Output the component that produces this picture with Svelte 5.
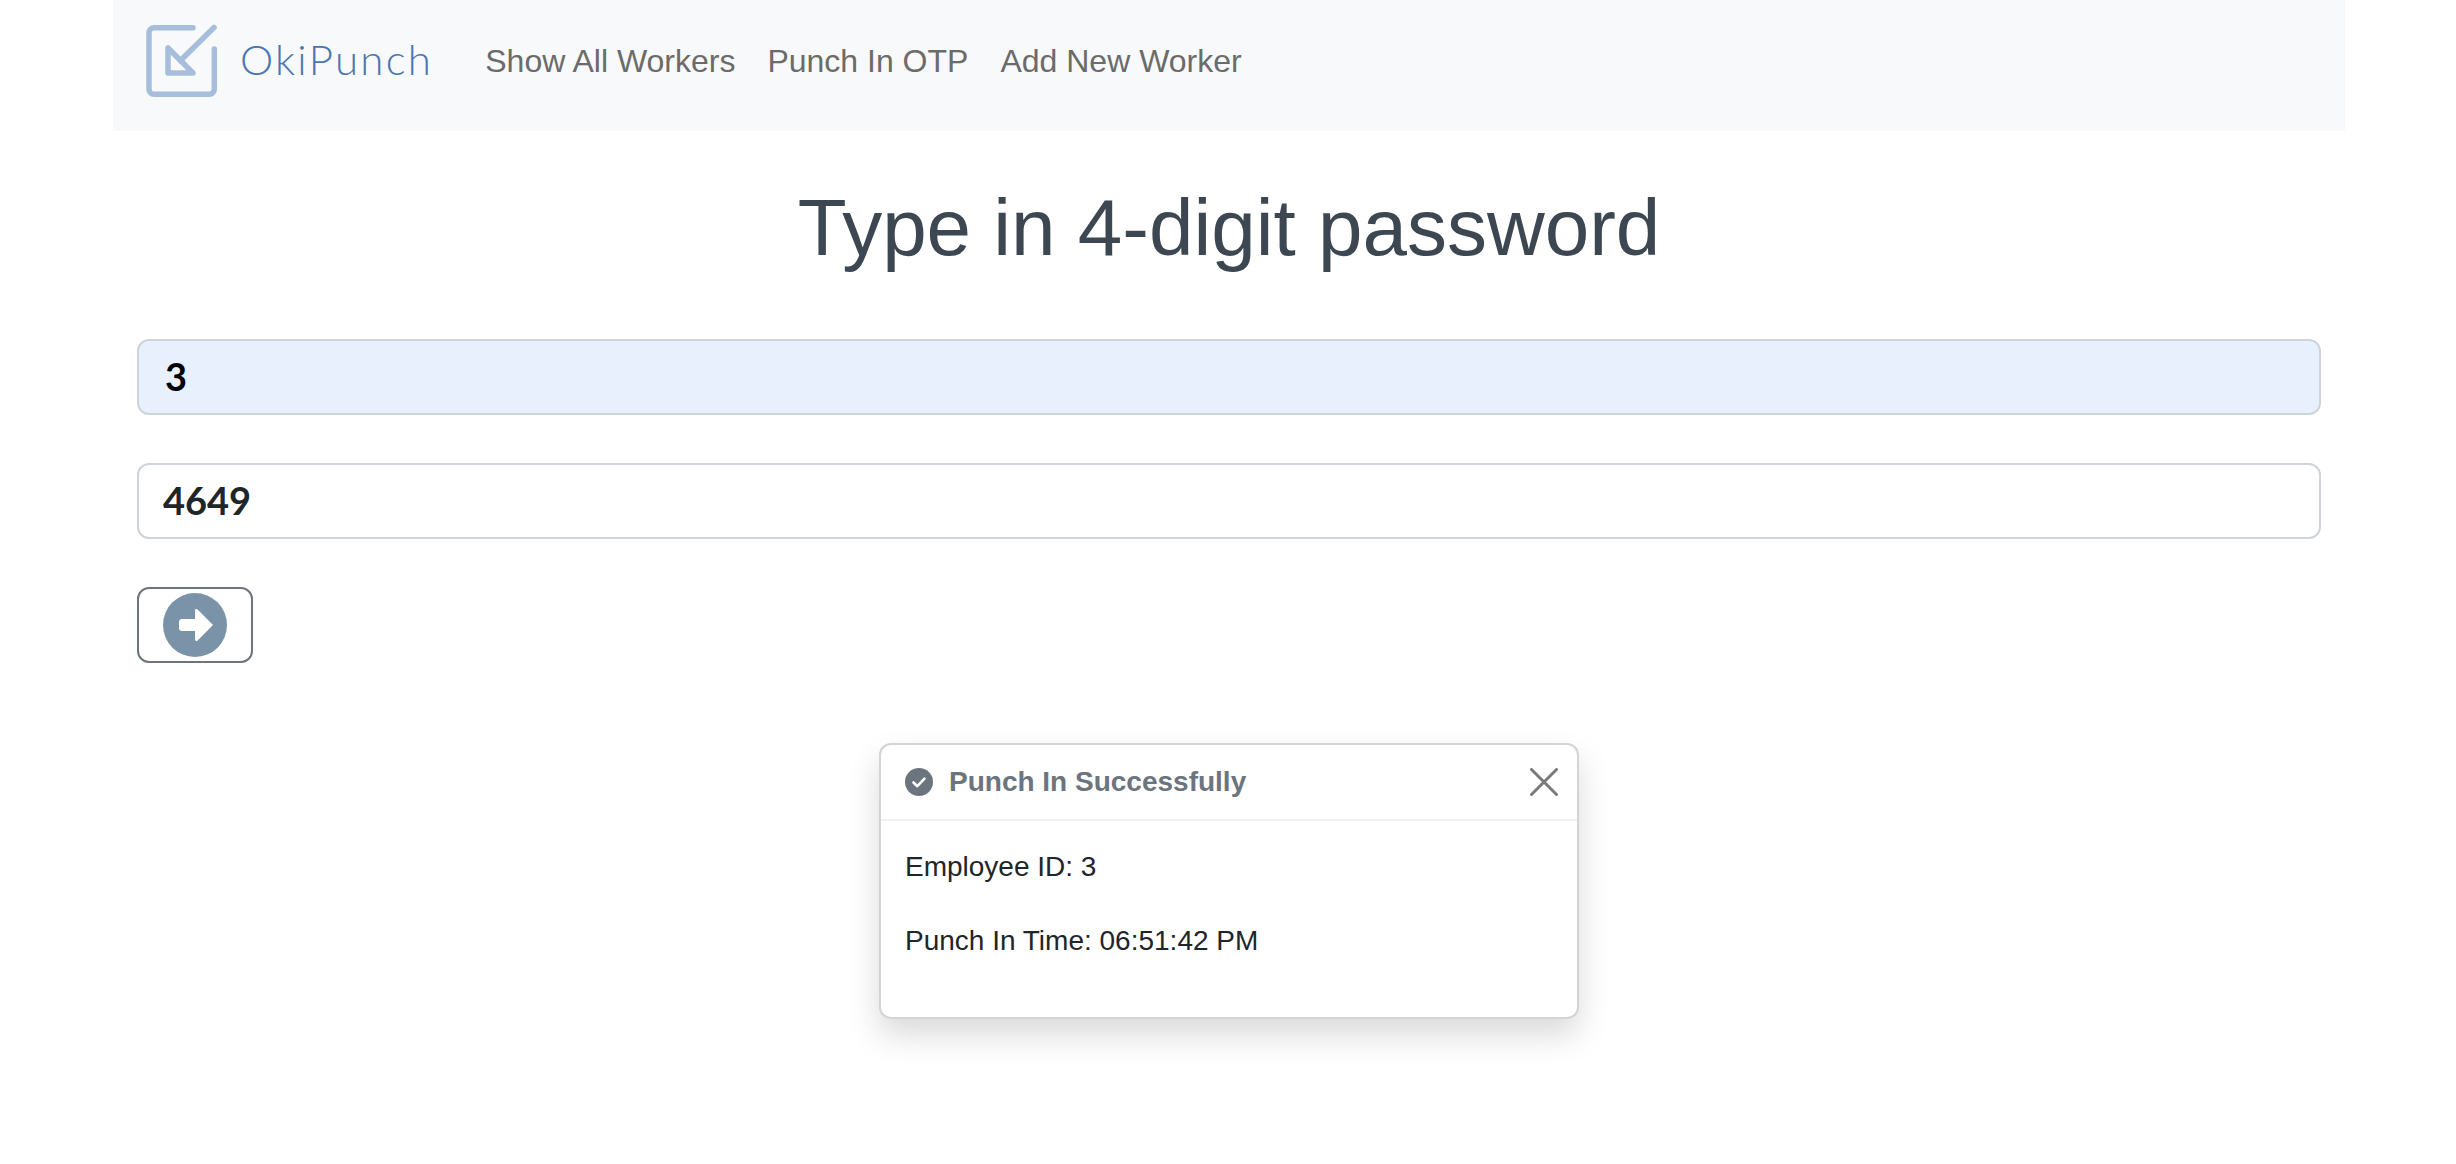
<script>
  let employeeId = "3";
  let password = "4649";
  const toastLines = ["Employee ID: 3", "Punch In Time: 06:51:42 PM"];
  const navLinks = ["Show All Workers", "Punch In OTP", "Add New Worker"];
</script>

<div class="container">
  <nav class="navbar">
    <a class="brand" href="#home">
      <svg class="logo" width="76" height="76" viewBox="0 0 76 76" fill="none" stroke="#a6bedb" stroke-width="5.500" stroke-linecap="round" stroke-linejoin="round" aria-hidden="true">
        <path d="M49 4.800H10a5 5 0 0 0-5 5v56.500a5 5 0 0 0 5 5h55.300a5 5 0 0 0 5-5V26" />
        <path d="M70 4.500 36.500 37.500" />
        <path d="M24 25v25h25z" />
      </svg>
      <span class="brand-name">OkiPunch</span>
    </a>
    <div class="nav-links">
      {#each navLinks as link}
        <a href="#top">{link}</a>
      {/each}
    </div>
  </nav>

  <main class="content">
    <h1>Type in 4-digit password</h1>
    <form class="punch-form">
      <input class="field autofilled" type="text" bind:value={employeeId} aria-label="Employee ID" />
      <input class="field" type="text" bind:value={password} aria-label="Password" />
      <button class="go" type="button" aria-label="Submit">
        <svg width="64" height="64" viewBox="0 0 64 64" aria-hidden="true">
          <circle cx="32" cy="32" r="32" fill="#7b93a9" />
          <path d="M19 26h13v-8.500a1.500 1.500 0 0 1 2.600-1L50 32 34.600 47.500a1.500 1.500 0 0 1-2.600-1V38H19a3 3 0 0 1-3-3v-6a3 3 0 0 1 3-3z" fill="#fff" />
        </svg>
      </button>
    </form>

    <div class="toast" role="status">
      <div class="toast-header">
        <svg width="28" height="28" viewBox="0 0 28 28" aria-hidden="true">
          <circle cx="14" cy="14" r="14" fill="#6c757d" />
          <path d="M8.500 14.500l3.800 3.700 7.200-7.600" fill="none" stroke="#fff" stroke-width="2.600" stroke-linecap="round" stroke-linejoin="round" />
        </svg>
        <strong>Punch In Successfully</strong>
        <button class="close" type="button" aria-label="Close">
          <svg width="28" height="28" viewBox="0 0 28 28" aria-hidden="true">
            <path d="M1.500 1.500l25 25M26.500 1.500l-25 25" stroke="#7a7a7a" stroke-width="3" stroke-linecap="round" />
          </svg>
        </button>
      </div>
      <div class="toast-body">
        {#each toastLines as line}
          <p>{line}</p>
        {/each}
      </div>
    </div>
  </main>
</div>

<style>
  :global(body) {
    background: #fff;
    font-family: "Liberation Sans", Arial, sans-serif;
    color: #212529;
  }
  .container {
    width: 2232px;
    min-height: 1164px;
    margin-left: 113px;
  }
  .navbar {
    height: 131px;
    box-sizing: border-box;
    padding: 0 24px;
    background: #f8f9fa;
    display: flex;
    align-items: center;
  }
  .brand {
    display: flex;
    align-items: center;
    gap: 20px;
    text-decoration: none;
    margin-right: 52px;
  }
  .logo {
    display: block;
    margin-top: -9px;
    margin-left: 7px;
  }
  .brand-name {
    font-family: Lato, sans-serif;
    font-weight: 300;
    font-size: 42px;
    letter-spacing: 2.300px;
    color: #4a76b1;
    margin-top: -14px;
  }
  .nav-links {
    display: flex;
    gap: 32px;
    margin-top: -8px;
  }
  .nav-links a {
    font-size: 32px;
    color: #6b6b6b;
    text-decoration: none;
  }
  .content {
    padding: 0 24px;
  }
  h1 {
    margin: 49px 0 0;
    font-size: 80px;
    font-weight: 400;
    line-height: 96px;
    text-align: center;
    color: #3d4752;
  }
  .punch-form {
    display: flex;
    flex-direction: column;
    align-items: flex-start;
    gap: 48px;
    margin-top: 63px;
  }
  .field {
    width: 100%;
    height: 76px;
    box-sizing: border-box;
    padding: 0 24px 2px;
    border: 2px solid #ced4da;
    border-radius: 12px;
    background: #fff;
    color: #212529;
    font-family: Lato, sans-serif;
    font-weight: 700;
    font-size: 38px;
    outline: none;
  }
  .autofilled {
    background: #e8f0fe;
    color: #000;
    padding-left: 26px;
  }
  .go {
    width: 116px;
    height: 76px;
    padding: 0;
    box-sizing: border-box;
    display: flex;
    align-items: center;
    justify-content: center;
    border: 2px solid #6c757d;
    border-radius: 12px;
    background: #fff;
  }
  .toast {
    width: 700px;
    box-sizing: border-box;
    margin: 80px auto 0;
    background: #fff;
    border: 2px solid rgba(0, 0, 0, 0.17);
    border-radius: 12px;
    box-shadow: 0 16px 32px rgba(0, 0, 0, 0.15);
    font-size: 28px;
  }
  .toast-header {
    height: 76px;
    box-sizing: border-box;
    padding: 0 19px 0 24px;
    display: flex;
    align-items: center;
    gap: 16px;
    border-bottom: 2px solid #f1f2f3;
    color: #6c757d;
  }
  .toast-header strong {
    flex: 1;
  }
  .close {
    padding: 0;
    border: 0;
    background: none;
    display: flex;
  }
  .toast-body {
    padding: 25px 24px 0;
    height: 196px;
    box-sizing: border-box;
  }
  .toast-body p {
    margin: 0 0 32px;
    line-height: 42px;
  }
</style>
